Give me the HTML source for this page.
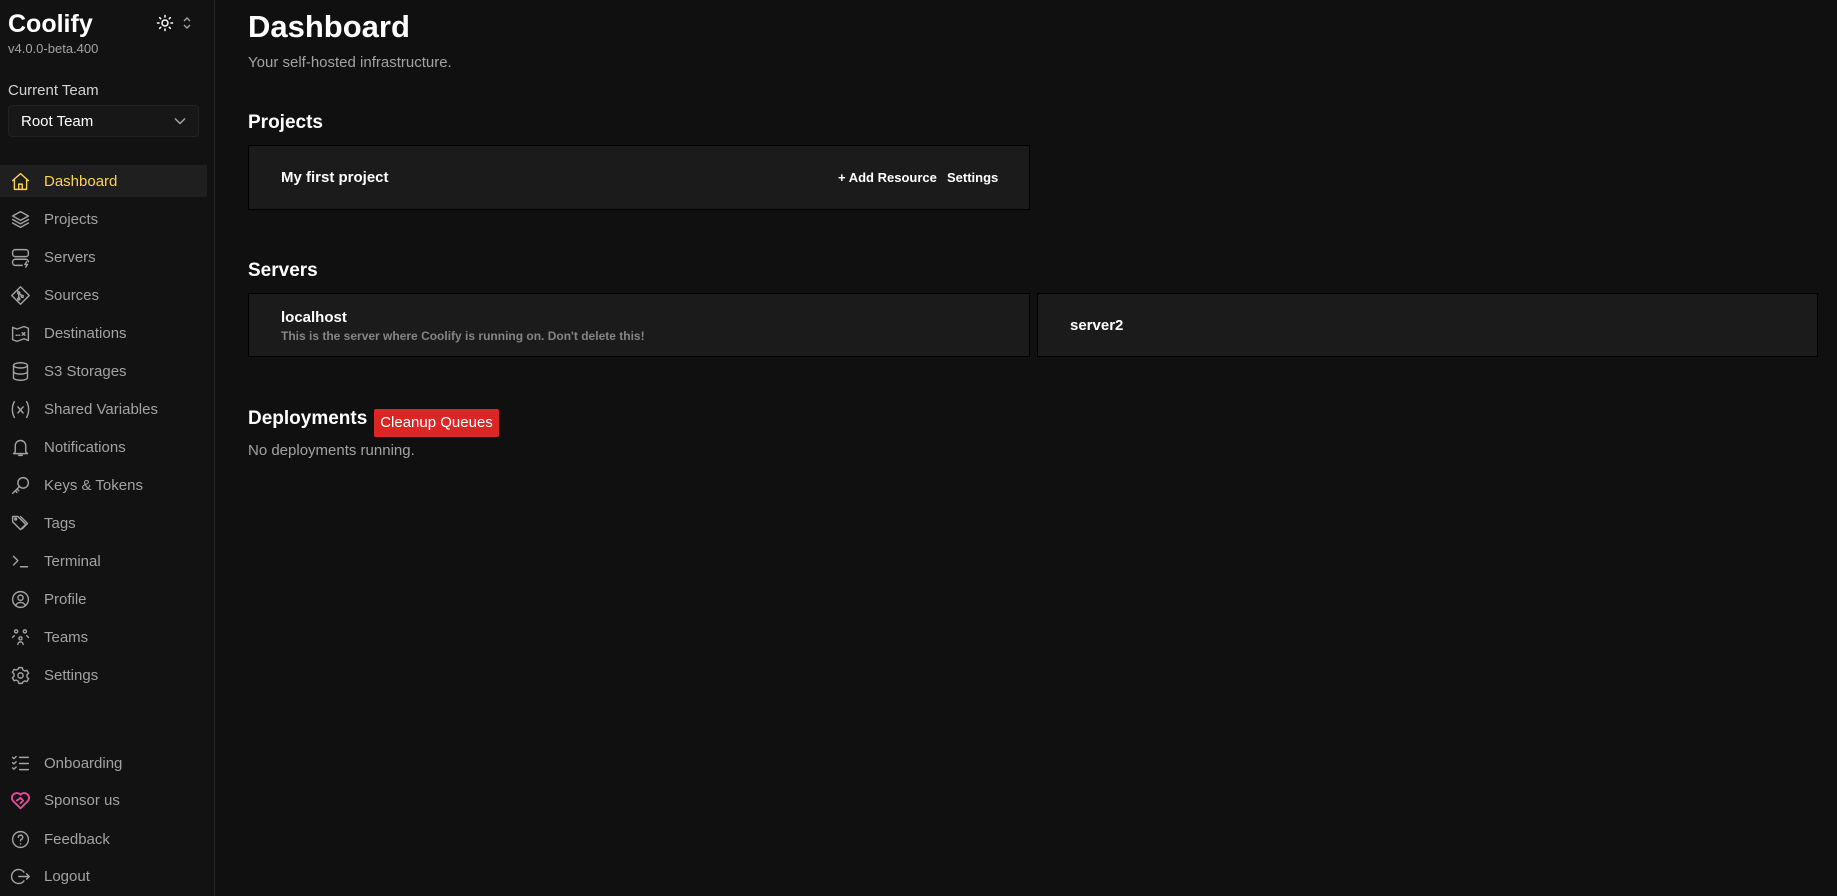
<!DOCTYPE html>
<html><head><meta charset="utf-8"><style>
*{box-sizing:border-box;margin:0;padding:0}
body{width:1837px;height:896px;background:#101010;font-family:"Liberation Sans",sans-serif;color:#fff;position:relative;overflow:hidden}
.sb{position:absolute;left:0;top:0;width:215px;height:896px;background:#121212;border-right:1px solid #242424}
.abs{position:absolute}
.nav{position:absolute;left:0;width:207px;height:32px;display:flex;align-items:center;color:#a3a3a3;font-size:15px}
.nav svg{position:absolute;left:10px;width:21px;height:21px;fill:none;stroke:#a3a3a3;stroke-width:1.6;stroke-linecap:round;stroke-linejoin:round}
.nav span{position:absolute;left:44px}
.card{position:absolute;background:#1b1b1b;border:1px solid #000}
</style></head><body>
<div class="sb">
 <div class="abs" style="left:8px;top:10px;font-size:25px;font-weight:bold">Coolify</div>
 <div class="abs" style="left:8px;top:41px;font-size:13px;color:#a3a3a3">v4.0.0-beta.400</div>
 <svg class="abs" style="left:156px;top:14px" width="18" height="18" viewBox="0 0 24 24" fill="none" stroke="#fff" stroke-width="2" stroke-linecap="round"><circle cx="12" cy="12" r="4"/><path d="M12 2v2M12 20v2M2 12h2M20 12h2M4.9 4.9l1.4 1.4M17.7 17.7l1.4 1.4M4.9 19.1l1.4-1.4M17.7 6.3l1.4-1.4"/></svg>
 <svg class="abs" style="left:182px;top:16px" width="10" height="14" viewBox="0 0 10 14" fill="none" stroke="#a3a3a3" stroke-width="1.4"><path d="M2 5l3-3 3 3M2 9l3 3 3-3"/></svg>
 <div class="abs" style="left:8px;top:82px;font-size:15px;color:#d4d4d4">Current Team</div>
 <div class="abs" style="left:8px;top:105px;width:191px;height:32px;background:#171717;border:1px solid #222;border-radius:4px;font-size:15px;padding:7px 12px">Root Team
  <svg class="abs" style="right:12px;top:11px" width="12" height="8" viewBox="0 0 12 8" fill="none" stroke="#a3a3a3" stroke-width="1.5"><path d="M1 1.5l5 5 5-5"/></svg></div>

 <div class="nav" style="top:165px;background:#1f1f1f;color:#fcd452"><svg viewBox="0 0 24 24" style="stroke:#fcd452"><path d="M3 11l9-8 9 8M5 9.5V21h14V9.5M10 21v-6h4v6"/></svg><span>Dashboard</span></div>
 <div class="nav" style="top:203px"><svg viewBox="0 0 24 24"><path d="M12 3l9 5-9 5-9-5zM3 12l9 5 9-5M3 16l9 5 9-5"/></svg><span>Projects</span></div>
 <div class="nav" style="top:241px"><svg viewBox="0 0 24 24"><rect x="3" y="3" width="18" height="8" rx="3"/><path d="M14 21H6a3 3 0 0 1-3-3v-1a3 3 0 0 1 3-3h12a3 3 0 0 1 3 3M19 17l-2 3h3l-2 3"/></svg><span>Servers</span></div>
 <div class="nav" style="top:279px"><svg viewBox="0 0 24 24"><path d="M12 2l10 10-10 10L2 12z"/><circle cx="10" cy="9" r="1.2"/><circle cx="10" cy="16" r="1.2"/><circle cx="14" cy="13" r="1.2"/><path d="M10 10v5M8 6l2 2M10.5 10l3 2"/></svg><span>Sources</span></div>
 <div class="nav" style="top:317px"><svg viewBox="0 0 24 24"><path d="M3 5l5 2 8-3 5 2v14l-5-2-8 3-5-2zM7 14h1M10 14h1M14 11l3 3M17 11l-3 3"/></svg><span>Destinations</span></div>
 <div class="nav" style="top:355px"><svg viewBox="0 0 24 24"><ellipse cx="12" cy="5" rx="8" ry="3"/><path d="M4 5v14c0 1.7 3.6 3 8 3s8-1.3 8-3V5M4 12c0 1.7 3.6 3 8 3s8-1.3 8-3"/></svg><span>S3 Storages</span></div>
 <div class="nav" style="top:393px"><svg viewBox="0 0 24 24"><path d="M5 3c-3 5-3 13 0 18M19 3c3 5 3 13 0 18M9 9l6 7M15 9l-6 7"/></svg><span>Shared Variables</span></div>
 <div class="nav" style="top:431px"><svg viewBox="0 0 24 24"><path d="M6 17V10a6 6 0 0 1 12 0v7l2 2H4zM10 21h4"/></svg><span>Notifications</span></div>
 <div class="nav" style="top:469px"><svg viewBox="0 0 24 24"><circle cx="15" cy="9" r="6"/><path d="M11 13l-8 8M6 18l2 2M8 16l2 2"/></svg><span>Keys &amp; Tokens</span></div>
 <div class="nav" style="top:507px"><svg viewBox="0 0 24 24"><path d="M3 6V4h6l9 9-6 6-9-9zM12 4l8 8-6 6"/><circle cx="6.5" cy="7" r="1"/></svg><span>Tags</span></div>
 <div class="nav" style="top:545px"><svg viewBox="0 0 24 24"><path d="M4 6l5 5-5 5M12 18h8"/></svg><span>Terminal</span></div>
 <div class="nav" style="top:583px"><svg viewBox="0 0 24 24"><circle cx="12" cy="12" r="9"/><circle cx="12" cy="10" r="3"/><path d="M6.5 19a6 6 0 0 1 11 0"/></svg><span>Profile</span></div>
 <div class="nav" style="top:621px"><svg viewBox="0 0 24 24"><circle cx="7" cy="5" r="1.8"/><circle cx="17" cy="5" r="1.8"/><circle cx="12" cy="13" r="1.8"/><path d="M3 12a4 4 0 0 1 2-2M21 12a4 4 0 0 0-2-2M9 20a3 3 0 0 1 6 0"/></svg><span>Teams</span></div>
 <div class="nav" style="top:659px"><svg viewBox="0 0 24 24"><circle cx="12" cy="12" r="3"/><path d="M10 3h4l.6 2.5 2.2 1.3 2.5-.8 2 3.4-1.9 1.8v2.6l1.9 1.8-2 3.4-2.5-.8-2.2 1.3L14 21h-4l-.6-2.5-2.2-1.3-2.5.8-2-3.4 1.9-1.8v-2.6L2.7 8.4l2-3.4 2.5.8 2.2-1.3z"/></svg><span>Settings</span></div>

 <div class="nav" style="top:747px"><svg viewBox="0 0 24 24"><path d="M3 5l1.5 1.5L7 4M3 11l1.5 1.5L7 10M3 17l1.5 1.5L7 16M11 5h10M11 12h10M11 19h10"/></svg><span>Onboarding</span></div>
 <div class="nav" style="top:784px"><svg viewBox="0 0 24 24" style="stroke:#ec4899;stroke-width:2.2"><path d="M12 21l-8.5-8.5a5 5 0 0 1 8.5-7 5 5 0 0 1 8.5 7zM8 12l4-3 3 3-3 3"/></svg><span>Sponsor us</span></div>
 <div class="nav" style="top:823px"><svg viewBox="0 0 24 24"><circle cx="12" cy="12" r="9"/><path d="M9.5 9.5a2.5 2.5 0 1 1 3.5 2.3c-.7.3-1 .9-1 1.7M12 17h.01"/></svg><span>Feedback</span></div>
 <div class="nav" style="top:860px"><svg viewBox="0 0 24 24"><path d="M16 7a8 8 0 1 0 0 10M10 12h12M19 9l3 3-3 3"/></svg><span>Logout</span></div>
</div>

<div class="abs" style="left:248px;top:9px;font-size:31px;font-weight:bold">Dashboard</div>
<div class="abs" style="left:248px;top:54px;font-size:15px;color:#a3a3a3">Your self-hosted infrastructure.</div>
<div class="abs" style="left:248px;top:112px;font-size:19px;font-weight:bold">Projects</div>
<div class="card" style="left:248px;top:145px;width:782px;height:65px">
 <div class="abs" style="left:32px;top:23px;font-size:15px;font-weight:bold">My first project</div>
 <div class="abs" style="left:589px;top:24px;font-size:13px;font-weight:bold">+ Add Resource</div>
 <div class="abs" style="left:698px;top:24px;font-size:13px;font-weight:bold">Settings</div>
</div>
<div class="abs" style="left:248px;top:260px;font-size:19px;font-weight:bold">Servers</div>
<div class="card" style="left:248px;top:293px;width:782px;height:64px">
 <div class="abs" style="left:32px;top:15px;font-size:15px;font-weight:bold">localhost</div>
 <div class="abs" style="left:32px;top:35px;font-size:12px;font-weight:bold;color:#858585">This is the server where Coolify is running on. Don't delete this!</div>
</div>
<div class="card" style="left:1037px;top:293px;width:781px;height:64px">
 <div class="abs" style="left:32px;top:23px;font-size:15px;font-weight:bold">server2</div>
</div>
<div class="abs" style="left:248px;top:408px;font-size:19px;font-weight:bold">Deployments</div>
<div class="abs" style="left:374px;top:409px;width:125px;height:28px;background:#dc2626;border-radius:2px;font-size:15px;line-height:28px;text-align:center">Cleanup Queues</div>
<div class="abs" style="left:248px;top:442px;font-size:15px;color:#a3a3a3">No deployments running.</div>
</body></html>
